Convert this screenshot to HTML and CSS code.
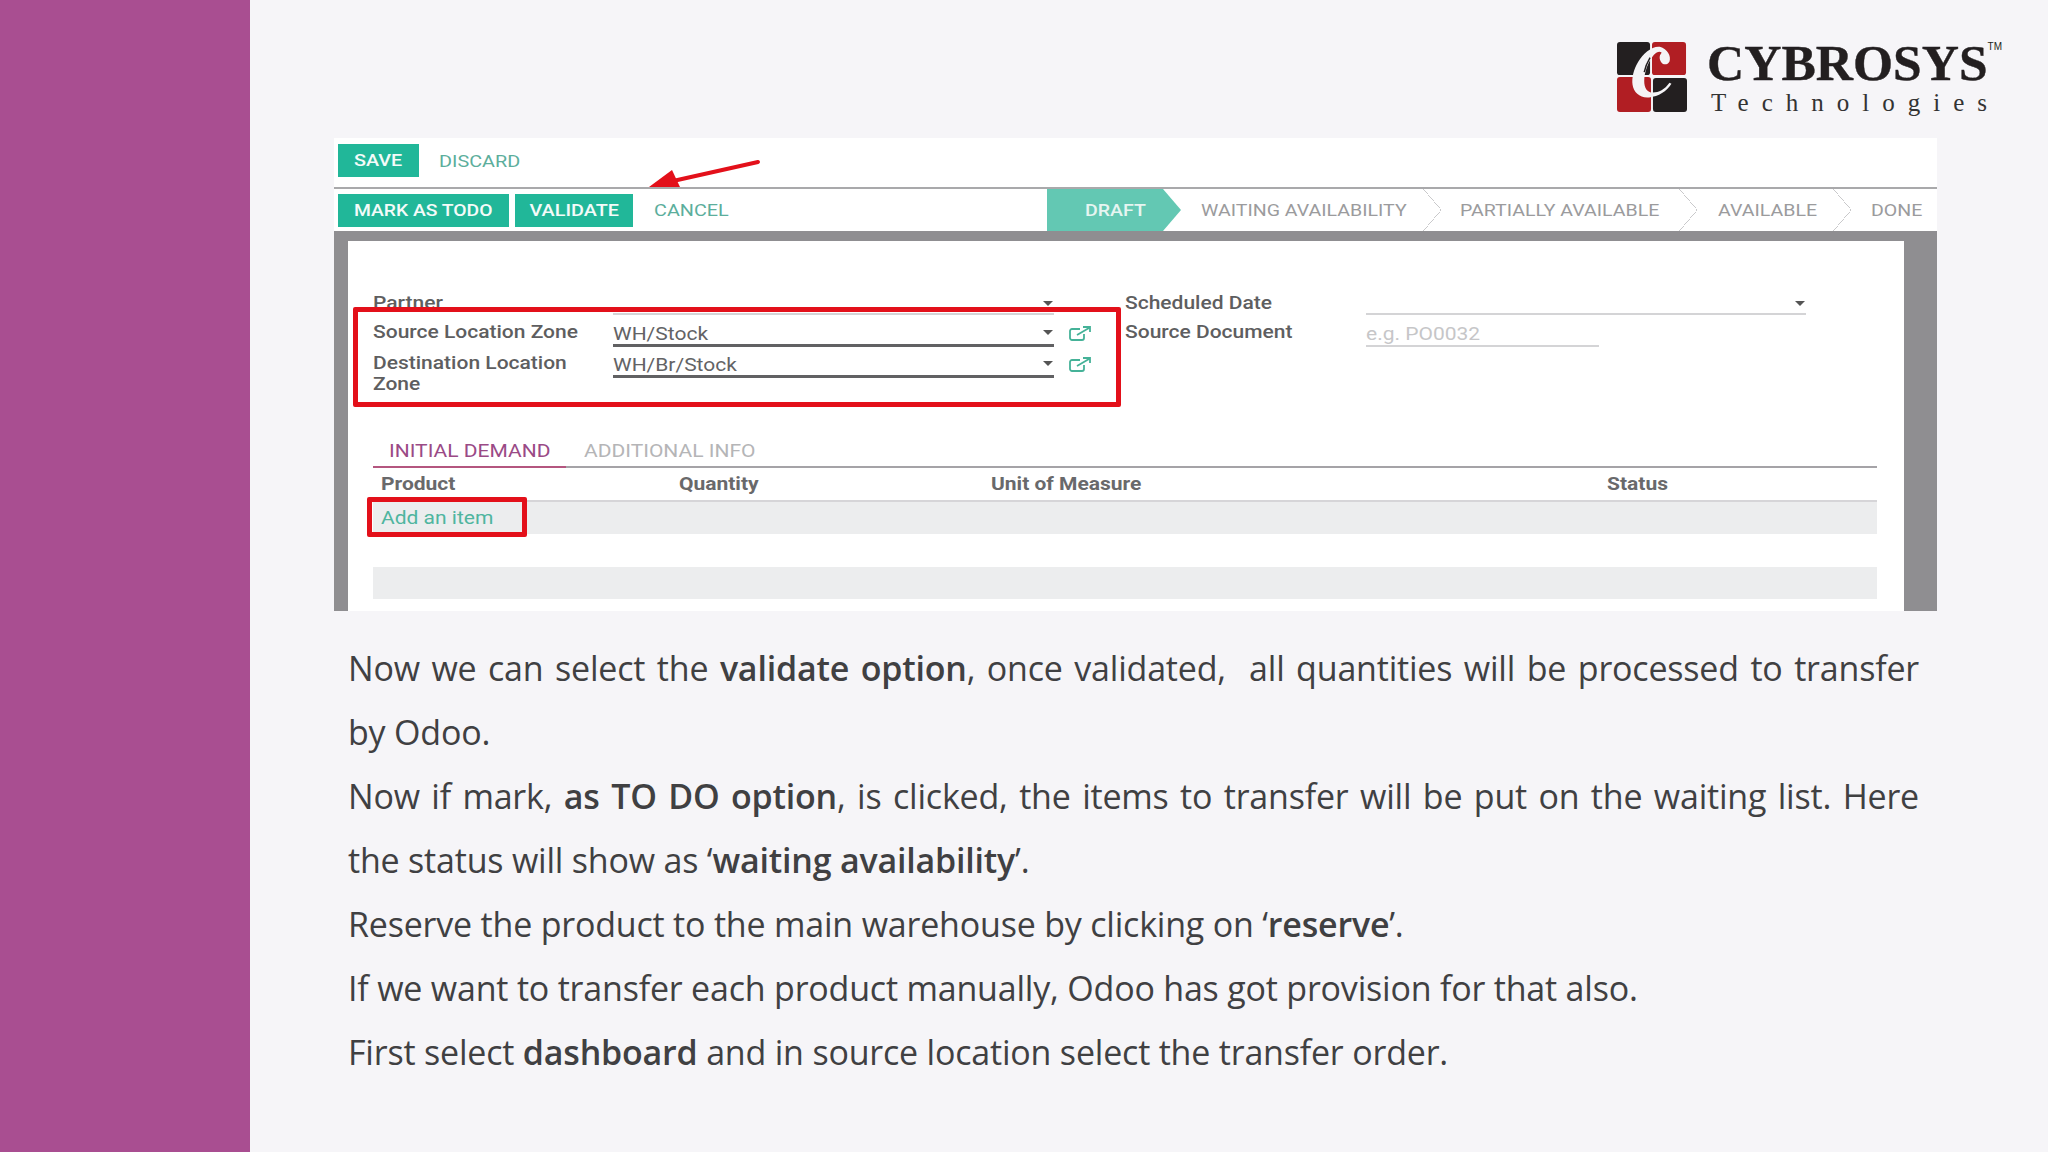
FILE: index.html
```html
<!DOCTYPE html>
<html lang="en">
<head>
  <meta charset="UTF-8">
  <title>Odoo internal transfer</title>
  <link rel="stylesheet" href="styles.css">
</head>
<body>
  <div class="slide">
    <div class="sidebar"></div>

    <div class="main">
      <div class="logo-row">
        <div class="logo">
          <svg class="logo-mark" viewBox="0 0 72 72" width="70" height="70">
            <rect x="0" y="0" width="34" height="34" rx="3" fill="#231f20"/>
            <rect x="36" y="0" width="35" height="34" rx="3" fill="#b11e23"/>
            <rect x="0" y="36" width="35" height="36" rx="3" fill="#b11e23"/>
            <rect x="37" y="37" width="35" height="35" rx="3" fill="#231f20"/>
            <path d="M44 5C36 4 27 12 22 20C17 28 15 37 16 44C17 52 24 58 33 57C43 56 51 51 56 43L54 42C49 49 43 52 37 52C31 52 28 47 28 40C28 31 32 20 38 13C41 10 44 9 46 11C44 13 43 16 45 20C47 24 52 24 54 20C56 15 52 7 44 5Z" fill="#f5f4f6"/>
            <path d="M34 16C31 21 29 26 28 31" fill="none" stroke="#231f20" stroke-width="1.500"/>
          </svg>
          <div class="logo-text">
            <div class="logo-name">CYBROSYS<sup class="logo-tm">TM</sup></div>
            <div class="logo-sub">Technologies</div>
          </div>
        </div>
      </div>

      <div class="shot">
        <div class="bar bar-top">
          <span class="btn btn-save"><span class="st st-mid">SAVE</span></span>
          <span class="link link-discard"><span class="st">DISCARD</span></span>
        </div>

        <div class="bar bar-status">
          <span class="btn btn-todo"><span class="st st-mid">MARK AS TODO</span></span>
          <span class="btn btn-validate"><span class="st st-mid">VALIDATE</span></span>
          <span class="link link-cancel"><span class="st">CANCEL</span></span>
          <div class="steps">
            <span class="step step-draft"><span class="st">DRAFT</span></span>
            <span class="step step-waiting"><span class="st">WAITING AVAILABILITY</span></span>
            <span class="step step-partial"><span class="st">PARTIALLY AVAILABLE</span></span>
            <span class="step step-available"><span class="st">AVAILABLE</span></span>
            <span class="step step-done"><span class="st">DONE</span></span>
          </div>
        </div>

        <div class="sheet-wrap">
          <div class="sheet">
            <div class="form-cols">
              <div class="form-col form-col-left">
                <div class="field field-partner">
                  <span class="label"><span class="st">Partner</span></span>
                  <div class="input input-light"><span class="caret"></span></div>
                </div>
                <div class="field field-source">
                  <span class="label"><span class="st">Source Location Zone</span></span>
                  <div class="input input-dark"><span class="st">WH/Stock</span><span class="caret"></span></div>
                  <svg class="ext-icon" viewBox="0 0 22 15" width="22" height="15"><path d="M15 8v4a2 2 0 0 1-2 2H3a2 2 0 0 1-2-2V5a2 2 0 0 1 2-2h8M8 9L20 2M14 1h7v5" fill="none" stroke="#45b298" stroke-width="1.800"/></svg>
                </div>
                <div class="field field-dest">
                  <span class="label"><span class="st">Destination Location Zone</span></span>
                  <div class="input input-dark"><span class="st">WH/Br/Stock</span><span class="caret"></span></div>
                  <svg class="ext-icon" viewBox="0 0 22 15" width="22" height="15"><path d="M15 8v4a2 2 0 0 1-2 2H3a2 2 0 0 1-2-2V5a2 2 0 0 1 2-2h8M8 9L20 2M14 1h7v5" fill="none" stroke="#45b298" stroke-width="1.800"/></svg>
                </div>
              </div>
              <div class="form-col form-col-right">
                <div class="field field-partner">
                  <span class="label"><span class="st">Scheduled Date</span></span>
                  <div class="input input-light input-date"><span class="caret"></span></div>
                </div>
                <div class="field field-source">
                  <span class="label"><span class="st">Source Document</span></span>
                  <div class="input input-light input-doc"><span class="st">e.g. PO0032</span></div>
                </div>
              </div>
            </div>

            <div class="tabs">
              <span class="tab tab-active"><span class="st">INITIAL DEMAND</span></span>
              <span class="tab"><span class="st">ADDITIONAL INFO</span></span>
            </div>

            <div class="table-head">
              <span class="col-product"><span class="st">Product</span></span>
              <span class="col-qty"><span class="st">Quantity</span></span>
              <span class="col-unit"><span class="st">Unit of Measure</span></span>
              <span class="col-status"><span class="st">Status</span></span>
            </div>
            <div class="table-row"><span class="st">Add an item</span></div>
            <div class="table-row table-row-last"></div>
          </div>
        </div>

        <!-- annotations drawn over the screenshot -->
        <div class="mark mark-zone"></div>
        <div class="mark mark-add"></div>
        <svg class="arrow" viewBox="0 0 120 34" width="120" height="34">
          <path d="M111 6L26 25" stroke="#e3101a" stroke-width="4" stroke-linecap="round"/>
          <path d="M2 31L25 14L33 31z" fill="#e3101a"/>
        </svg>
      </div>

      <div class="copy">
        <p><span class="line-full">Now we can select the <b>validate option</b>, once validated,&nbsp; all quantities will be processed to transfer</span> by Odoo.</p>
        <p><span class="line-full">Now if mark, <b>as TO DO option</b>, is clicked, the items to transfer will be put on the waiting list. Here</span> the status will show as ‘<b>waiting availability</b>’.</p>
        <p>Reserve the product to the main warehouse by clicking on ‘<b>reserve</b>’.</p>
        <p>If we want to transfer each product manually, Odoo has got provision for that also.</p>
        <p>First select <b>dashboard</b> and in source location select the transfer order.</p>
      </div>
    </div>
  </div>
</body>
</html>
```

FILE: styles.css
```css
/* Reset */
* {
  margin: 0;
  padding: 0;
  box-sizing: border-box;
}

body {
  width: 2048px;
  height: 1152px;
  overflow: hidden;
  background-color: #f6f5f8;
  font-family: 'Roboto', sans-serif;
}

.slide {
  display: flex;
  height: 1152px;
}

.sidebar {
  width: 250px;
  background-color: #a94e91;
}

.main {
  flex: 1;
  display: flex;
  flex-direction: column;
}

/* Logo */
.logo-row {
  height: 138px;
  display: flex;
  justify-content: flex-end;
  padding: 42px 46px 0 0;
}

.logo {
  display: flex;
  gap: 20px;
  height: 72px;
}

.logo-name {
  font-family: 'Liberation Serif', serif;
  font-weight: bold;
  font-size: 51.500px;
  line-height: 40px;
  color: #231f20;
  -webkit-text-stroke: 0.4px #231f20;
  white-space: nowrap;
  margin-top: 1px;
}

.logo-tm {
  font-family: 'Liberation Sans', sans-serif;
  font-size: 10px;
  font-weight: normal;
  -webkit-text-stroke: 0;
  vertical-align: 30px;
  line-height: 0;
}

.logo-sub {
  font-family: 'Liberation Serif', serif;
  font-size: 25px;
  line-height: 30px;
  letter-spacing: 13px;
  color: #333;
  white-space: nowrap;
  margin: 5px 0 0 4px;
}

/* Screenshot: the source picture is stretched sideways, so its text is too */
.st {
  display: inline-block;
  transform: scaleX(1.2);
  transform-origin: left center;
}

.st-mid {
  transform-origin: center;
}

.shot {
  position: relative;
  margin-left: 84px;
  width: 1603px;
  height: 473px;
  background-color: #fff;
  display: flex;
  flex-direction: column;
}

.bar {
  display: flex;
  align-items: center;
  font-size: 16.500px;
  font-weight: 500;
}

.bar-top {
  height: 51px;
  padding: 0 4px;
  border-bottom: 2px solid #a9a9ab;
}

.bar-status {
  height: 42px;
  padding: 0 4px;
}

.btn {
  display: flex;
  align-items: center;
  justify-content: center;
  height: 33px;
  background-color: #21b799;
  color: #f4fbf9;
}

.btn-save {
  width: 81px;
  margin-top: -4px;
}

.btn-todo {
  width: 171px;
}

.btn-todo .st {
  transform: scaleX(1.17);
}

.btn-validate {
  width: 118px;
  margin-left: 6px;
}

.link {
  color: #5cae9c;
  font-weight: 400;
}

.link-discard {
  margin-left: 20px;
  margin-top: -2px;
}

.link-cancel {
  margin-left: 21px;
}

.steps {
  display: flex;
  align-items: center;
  height: 42px;
  margin-left: auto;
  margin-right: -4px;
  width: 890px;
  color: #9b9b9d;
  font-weight: 400;
}

.steps .st {
  transform: scaleX(1.185);
}

.step {
  display: flex;
  align-items: center;
  height: 42px;
  white-space: nowrap;
  background: linear-gradient(to top right, transparent 49.500%, #c9c9cb 49.500%, #c9c9cb 52%, transparent 52%) right top / 18px 21px no-repeat,
    linear-gradient(to bottom right, transparent 49.500%, #c9c9cb 49.500%, #c9c9cb 52%, transparent 52%) right bottom / 18px 21px no-repeat;
}

.step-draft {
  width: 134px;
  padding-left: 38px;
  color: #e6f5f1;
  font-weight: 500;
  background: #63c8b3;
  clip-path: polygon(0 0, 116px 0, 134px 50%, 116px 100%, 0 100%);
}

.step-waiting {
  width: 260px;
  padding-left: 20px;
}

.step-partial {
  width: 256px;
  padding-left: 19px;
}

.step-available {
  width: 154px;
  padding-left: 21px;
}

.step-done {
  padding-left: 20px;
  background: none;
}

/* Sheet */
.sheet-wrap {
  flex: 1;
  background-color: #8f8e91;
  padding: 10px 33px 0 14px;
  display: flex;
}

.sheet {
  flex: 1;
  background-color: #fff;
  padding: 48px 27px 0 25px;
  color: #59595b;
}

.form-cols {
  display: flex;
  height: 144px;
  font-size: 17.500px;
}

.form-col-left {
  width: 752px;
}

.form-col-right {
  flex: 1;
}

.field {
  display: flex;
  align-items: flex-start;
}

.field-partner {
  height: 27px;
}

.field-source,
.field-dest {
  height: 31px;
}

.label {
  width: 240px;
  font-weight: 500;
  line-height: 21px;
  color: #5e5e60;
  padding-top: 6px;
}

.label .st {
  width: 198px;
}

.field-partner .label {
  padding-top: 4px;
}

.form-col-right .label {
  width: 241px;
}

.input {
  position: relative;
  width: 441px;
  height: 26px;
  line-height: 26px;
  color: #636365;
}

.field-source .input,
.field-dest .input {
  height: 31px;
  padding-top: 5px;
}

.input-dark {
  border-bottom: 3px solid #616163;
}

.input-light {
  border-bottom: 2px solid #d4d4d6;
}

.input-date {
  width: 440px;
}

.input-doc {
  width: 233px;
  color: #c6c6c8;
}

.caret {
  position: absolute;
  right: 1px;
  top: 14px;
  border-left: 5.500px solid transparent;
  border-right: 5.500px solid transparent;
  border-top: 5px solid #555;
}

.input-light .caret {
  top: 12px;
}

.ext-icon {
  margin: 10px 0 0 15px;
}

/* Tabs */
.tabs {
  display: flex;
  height: 35px;
  border-bottom: 2px solid #a5a3a7;
  font-size: 17.500px;
  color: #b5b5b7;
}

.tab {
  padding: 0 20px 0 16px;
  line-height: 36px;
  white-space: nowrap;
}

.tab-active {
  width: 193px;
  height: 33px;
  color: #9a4a86;
  font-weight: 400;
  box-shadow: 0 2px 0 #b4567f;
}

.tab + .tab {
  padding-left: 18px;
}

/* Table */
.table-head {
  display: flex;
  height: 34px;
  align-items: center;
  border-bottom: 2px solid #d6d5d8;
  font-size: 17.500px;
  font-weight: 700;
  color: #69696b;
  padding-left: 8px;
}

.col-product {
  width: 298px;
}

.col-qty {
  width: 312px;
}

.col-unit {
  width: 616px;
}

.table-row {
  display: flex;
  align-items: center;
  height: 32px;
  background-color: #ecedee;
  padding-left: 8px;
  font-size: 17.500px;
  color: #4fb59f;
}

.table-row-last {
  margin-top: 33px;
}

/* Red annotations */
.mark {
  position: absolute;
  border: 5px solid #e3101a;
  border-radius: 2px;
}

.mark-zone {
  left: 19px;
  top: 169px;
  width: 768px;
  height: 100px;
}

.mark-add {
  left: 33px;
  top: 359px;
  width: 160px;
  height: 40px;
}

.arrow {
  position: absolute;
  left: 313px;
  top: 18px;
}

/* Body copy */
.copy {
  width: 1571px;
  margin: 25px 0 0 98px;
  font-family: 'Open Sans', sans-serif;
  font-size: 34px;
  letter-spacing: -0.200px;
  line-height: 64px;
  color: #404042;
}

.line-full {
  display: block;
  text-align: justify;
  text-align-last: justify;
}

.copy b {
  font-weight: 600;
}
```
